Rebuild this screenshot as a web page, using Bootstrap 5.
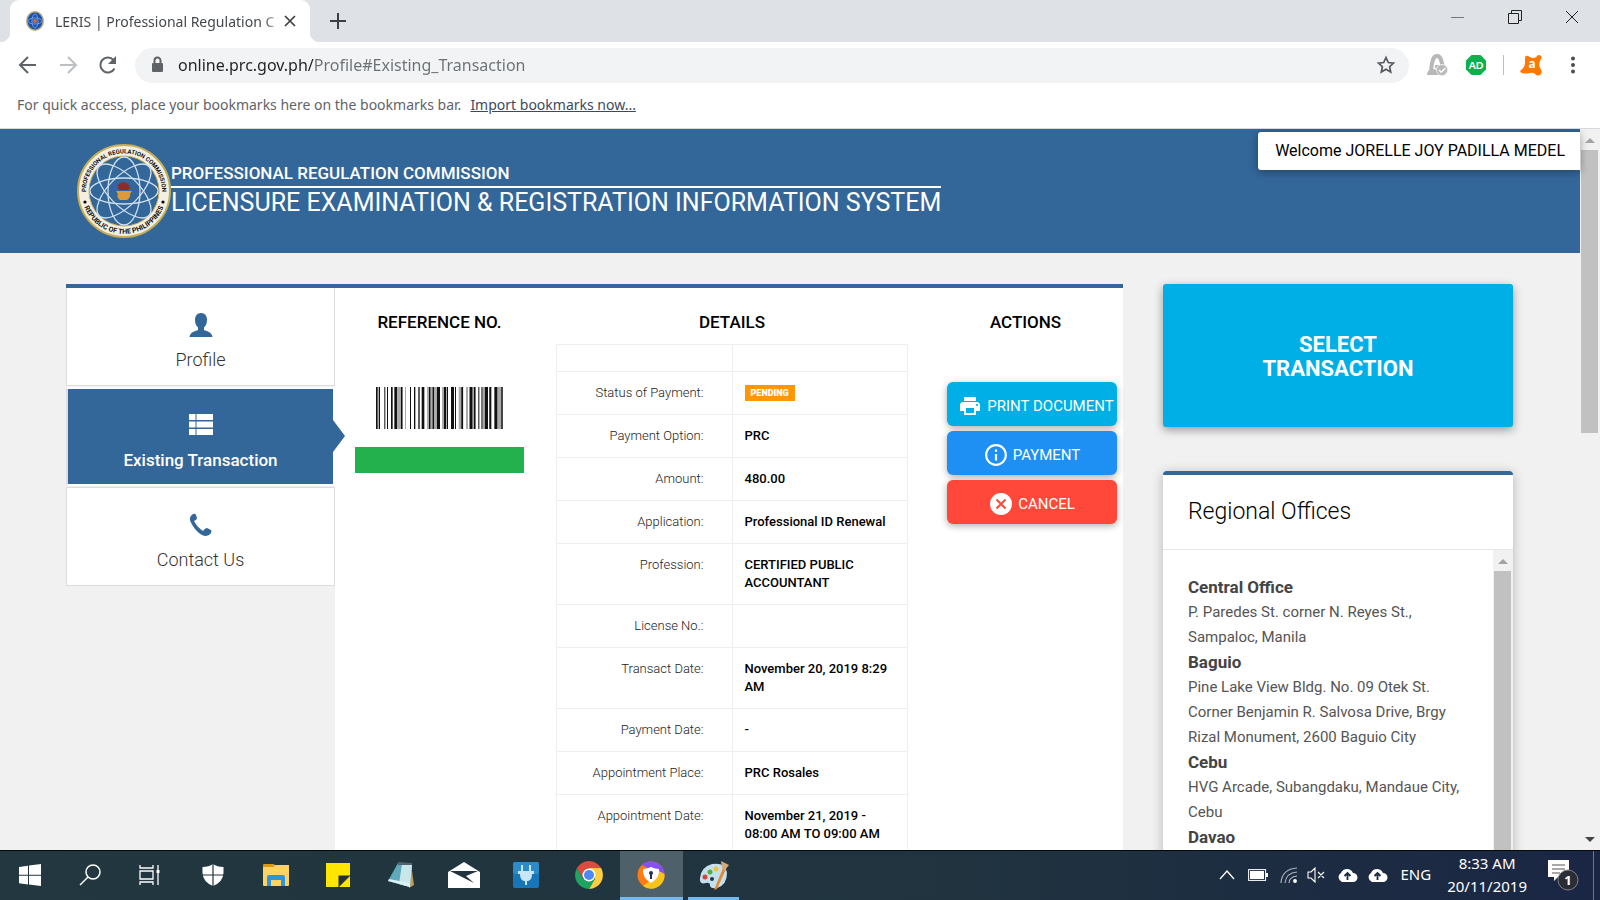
<!DOCTYPE html>
<html lang="en">
<head>
<meta charset="utf-8">
<meta name="viewport" content="width=device-width, initial-scale=1">
<title>LERIS | Professional Regulation Commission</title>
<link href="https://cdn.jsdelivr.net/npm/bootstrap@5.3.0/dist/css/bootstrap.min.css" rel="stylesheet">
<style>
  :root { --prc: #336699; --sky: #00afe6; }
  body { font-family: Roboto, sans-serif; background: #f1f1f1; color: #000; }
  svg { display: block; flex: none; }
  .ui-font { font-family: "Noto Sans", "Open Sans", sans-serif; }
  .plain { background: none; border: 0; padding: 0; display: flex; align-items: center; justify-content: center; }

  /* browser window */
  .tabstrip { background: #dee1e6; height: 42px; padding-left: 10px; }
  .tab-item { position: relative; width: 300px; background: #fff; border-radius: 9px 9px 0 0; padding: 0 12px 0 15px; font-size: 14px; color: #45494d; }
  .tab-item::before, .tab-item::after { content: ""; position: absolute; bottom: 0; width: 9px; height: 9px; }
  .tab-item::before { left: -9px; background: radial-gradient(circle at 0 0, transparent 9px, #fff 9px); }
  .tab-item::after { right: -9px; background: radial-gradient(circle at 100% 0, transparent 9px, #fff 9px); }
  .tab-text { flex: 1; margin-left: 10px; white-space: nowrap; -webkit-mask-image: linear-gradient(90deg, #000 92%, transparent); }
  .win-btn { width: 57px; padding-bottom: 8px; }
  .toolbar { height: 46px; background: #fff; padding: 0 20px 0 16px; }
  .nav-btn { width: 24px; height: 24px; }
  .omnibox { background: #f1f3f4; border-radius: 18px; height: 35px; padding: 0 13px 0 13px; margin-left: 15px; }
  .omnibox input { border: 0; outline: 0; padding: 0; margin-left: 12px; font-size: 16px; height: 30px;
    background: linear-gradient(90deg, #202124 136px, #6b7075 136px); -webkit-background-clip: text; background-clip: text; -webkit-text-fill-color: transparent; }
  .bookmarks { height: 41px; background: #fff; border-bottom: 1px solid #d5d8dc; padding: 0 17px 8px; font-size: 14px; color: #5f6368; gap: 9px; }
  .bookmarks a { color: #3c4a60; }

  /* scroll bars */
  .sbar { width: 20px; background: #f1f1f1; flex: none; }
  .sbar i { display: block; background: #c1c1c1; margin: 0 2px 0 1px; }
  .sbar-h { height: 283px; }

  /* page */
  .site-head { background: var(--prc); height: 124px; color: #fff; padding: 15px 0 0 77px; position: relative; }
  .org { font-size: 17px; line-height: 20px; padding: 19px 0 3px; border-bottom: 2px solid #fff; font-weight: 500; }
  .sys { font-size: 25px; line-height: 30px; font-weight: 400; margin: 0; }
  .welcome { position: absolute; top: 3px; right: 0; background: #fff; color: #000; height: 38px; line-height: 38px; font-size: 16px; padding: 0 15px 0 17px; border-radius: 3px 0 0 3px; box-shadow: 0 2px 8px rgba(0,0,0,.35); }
  .layout { display: grid; grid-template-columns: 269fr 788fr 40fr 350fr; padding: 31px 67px 0 66px; }
  .menu { border-top: 4px solid var(--prc); }
  .menu a { border: 1px solid #ddd; background: #fff; color: #333; font-size: 18px; font-weight: 300; line-height: 24px; height: 99px; margin-bottom: 1px; padding-top: 11px; gap: 11px; text-decoration: none; position: relative; }
  .menu a:first-child { border-top: 0; height: 98px; }
  .menu .current { background: var(--prc); color: #fff; font-size: 17px; font-weight: 500; border: 2px solid #fff; border-left-color: #ddd; }
  .menu .current::after { content: ""; position: absolute; left: 100%; top: 31px; border: solid transparent; border-width: 16px 0 16px 12px; border-left-color: var(--prc); }
  .panel { background: #fff; border-top: 4px solid var(--prc); display: grid; grid-template-columns: 200fr 393fr 195fr; align-content: start; min-height: 600px; }
  .panel h2 { font-size: 17px; line-height: 26px; font-weight: 500; text-align: center; margin: 21px 0 9px; }
  .ref { padding: 0 11px 0 20px; }
  .barcode { margin-top: 52px; }
  .ref-box { background: #22b14c; height: 26px; margin-top: 18px; }
  .facts { padding: 0 20px 0 21px; }
  .facts table { width: 100%; table-layout: fixed; font-size: 13px; line-height: 18px; border-collapse: collapse; }
  .facts th, .facts td { border: 1px solid #eee; vertical-align: top; padding: 12px; }
  .facts th { text-align: right; font-weight: 300; color: #222; padding-right: 28px; }
  .facts td { font-weight: 500; color: #000; }
  .facts tr:first-child > * { padding: 0; height: 27px; }
  .tag { display: inline-block; background: #ff9800; color: #fff; font-size: 9px; font-weight: 900; line-height: 16px; padding: 0 6px; border-radius: 0; margin-top: 1px; vertical-align: top; }
  .acts { padding: 38px 6px 0 19px; gap: 5px; }
  .acts button { height: 44px; border: 0; border-radius: 6px; color: #fff; font-size: 15px; font-weight: 400; padding: 4px 0 0; white-space: nowrap; box-shadow: 0 2px 7px rgba(0,0,0,.32); gap: 5px; }
  .print { background: #00afe6; }
  .pay { background: #1e90f3; }
  .cancel { background: #ff483a; }
  .pick { background: var(--sky); color: #fff; border: 0; border-radius: 3px; height: 143px; font-size: 22px; line-height: 24px; font-weight: 700; box-shadow: 0 3px 10px rgba(0,0,0,.38); padding: 2px 60px 0; }
  .offices { background: #fff; border-top: 4px solid var(--prc); border-radius: 4px 4px 0 0; margin-top: 44px; box-shadow: 0 2px 12px rgba(0,0,0,.25); }
  .offices h3 { font-size: 23px; line-height: 74px; font-weight: 300; padding-left: 25px; margin: 0; border-bottom: 1px solid #e6e6e6; }
  .offices dl { font-size: 15px; line-height: 25px; padding: 25px 28px 0 25px; color: #555; margin: 0; flex: 1; }
  .offices dt { font-size: 17px; font-weight: 700; color: #444; }
  .offices dd { margin: 0; }

  /* taskbar */
  .taskbar { height: 50px; border-top: 1px solid #05090c; background: linear-gradient(90deg, #22373f, #20333f 60%, #1a2644); color: #fff; }
  .sys-icons { width: 180px; }
  .app-icons { width: 563px; margin-left: 2px; }
  .taskbar .plain { flex: 1 1 0; height: 49px; padding-bottom: 2px; }
  .taskbar .app-on { background-color: #4e616a; border-bottom: 3px solid #76b9ed; padding: 1px 0 0; }
  .taskbar .app-run { background: linear-gradient(#76b9ed, #76b9ed) center bottom / 51px 3px no-repeat; }
  .tray { font-size: 15px; line-height: 23px; margin-right: 6px; padding: 0 14px 2px 0; border-right: 1px solid #6d7687; height: 49px; }
</style>
</head>
<body>
<div class="vh-100 d-flex flex-column overflow-hidden">

  <header class="ui-font">
    <div class="tabstrip d-flex align-items-stretch">
      <div class="tab-item d-flex align-items-center">
        <svg width="20" height="22" viewBox="0 0 20 22"><ellipse cx="10" cy="11" rx="9" ry="10" fill="#b9a97c"/><ellipse cx="10" cy="11" rx="7.500" ry="8.500" fill="#1c51a8"/><g fill="none" stroke="#6b9be6"><ellipse cx="10" cy="11" rx="3" ry="7"/><ellipse cx="10" cy="11" rx="7" ry="3"/></g><circle cx="10" cy="11" r="2" fill="#d2693a"/></svg>
        <span class="tab-text">LERIS | Professional Regulation C</span>
        <button class="plain" aria-label="Close tab"><svg width="16" height="16" viewBox="0 0 16 16" stroke="#3c4043" stroke-width="1.700"><path d="M3 3l10 10M13 3L3 13"/></svg></button>
      </div>
      <button class="plain ms-3 ps-1" aria-label="New tab"><svg width="16" height="16" viewBox="0 0 16 16" stroke="#3c4043" stroke-width="2"><path d="M8 0v16M0 8h16"/></svg></button>
      <div class="ms-auto d-flex">
        <button class="plain win-btn" aria-label="Minimize"><svg width="13" height="13" stroke="#777"><path d="M0 6.500h13"/></svg></button>
        <button class="plain win-btn" aria-label="Restore"><svg width="14" height="14" fill="none" stroke="#222"><path d="M.5 3.500h10v10H.5zM3.500 3.500v-3h10v10h-3"/></svg></button>
        <button class="plain win-btn" aria-label="Close"><svg width="14" height="14" stroke="#222"><path d="M1 1l12 12M13 1L1 13"/></svg></button>
      </div>
    </div>

    <div class="toolbar d-flex align-items-center">
      <button class="plain nav-btn" aria-label="Back"><svg width="22" height="22" viewBox="0 0 22 22" fill="none" stroke="#5f6368" stroke-width="2"><path d="M19 11H4M11 3l-8 8 8 8"/></svg></button>
      <button class="plain nav-btn ms-3" aria-label="Forward"><svg width="22" height="22" viewBox="0 0 22 22" fill="none" stroke="#bdc0c3" stroke-width="2"><path d="M3 11h15M11 3l8 8-8 8"/></svg></button>
      <button class="plain nav-btn ms-3" aria-label="Reload"><svg width="22" height="22" viewBox="0 0 22 22"><path d="M17.500 14.500A7.500 7.500 0 1 1 16.500 6" fill="none" stroke="#5f6368" stroke-width="2"/><path d="M19 2v8h-8z" fill="#5f6368"/></svg></button>
      <div class="omnibox d-flex align-items-center flex-fill">
        <svg width="18" height="18" viewBox="0 0 18 18"><rect x="4" y="7" width="11" height="9" rx="1" fill="#5f6368"/><path d="M6.500 8V4.500a3 3 0 0 1 6 0V8" fill="none" stroke="#5f6368" stroke-width="2"/></svg>
        <input class="flex-fill" type="text" aria-label="Address" value="online.prc.gov.ph/Profile#Existing_Transaction">
        <button class="plain" aria-label="Bookmark this page"><svg width="20" height="20" viewBox="0 0 20 20" fill="none" stroke="#55595e" stroke-width="1.700"><path d="M10 2.500l2.300 5 5.200.6-3.900 3.600 1.100 5.300-4.700-2.700L5.300 17l1.100-5.300L2.500 8.100l5.200-.6z"/></svg></button>
      </div>
      <button class="plain ms-3" aria-label="Online security"><svg width="24" height="24" viewBox="0 0 24 24"><path d="M6 18c1-7 1-15 6-15s5 8 6 15" fill="none" stroke="#b8b8b8" stroke-width="4"/><path d="M2 22q0-5 5-6l8 1v5z" fill="#b8b8b8"/><path d="M10 12h4v3h-4z" fill="#b8b8b8"/><circle cx="17" cy="17" r="5.500" fill="#b8b8b8" stroke="#ececec"/><path d="M14 17l2.200 2.200 4-4" fill="none" stroke="#fff" stroke-width="1.600"/></svg></button>
      <button class="plain ms-3" aria-label="AdBlock"><svg width="22" height="22" viewBox="0 0 22 22"><path d="M6.500 1h9L21 6.500v9L15.500 21h-9L1 15.500v-9z" fill="#0db14b"/><text x="11" y="14.500" text-anchor="middle" font-family="Lato" font-weight="900" font-size="10" fill="#fff">AD</text></svg></button>
      <span class="vr mx-3 align-self-center" style="height:20px"></span>
      <button class="plain" aria-label="Avast"><svg width="22" height="22" viewBox="0 0 22 22"><path d="M5 4q0-3 3-2l4 2q4 0 5-2 2-2 4 0 1 1 0 3-3 4-1 9 3 4 1 6-3 3-6 0-2-2-5-1-5 1-8 0-3-1-1-3 4-3 4-7z" fill="#ff7800"/><text x="12" y="14" text-anchor="middle" font-family="Lato" font-weight="900" font-size="13" fill="#fff">a</text></svg></button>
      <button class="plain ms-3" aria-label="Menu"><svg class="ms-1" width="18" height="18" fill="#4a4e52"><circle cx="11" cy="2.500" r="2"/><circle cx="11" cy="9" r="2"/><circle cx="11" cy="15.500" r="2"/></svg></button>
    </div>

    <div class="bookmarks d-flex align-items-center">
      <span>For quick access, place your bookmarks here on the bookmarks bar.</span>
      <a href="#">Import bookmarks now...</a>
    </div>
  </header>

  <div class="d-flex flex-fill overflow-hidden">
    <div class="flex-fill">
      <div class="site-head">
        <div class="d-flex">
          <svg width="94" height="94" viewBox="-47 -47 94 94">
            <circle r="46" fill="#f3efe2" stroke="#c6ad55" stroke-width="2"/>
            <circle r="35" fill="#336699" stroke="#c6ad55"/>
            <g fill="none" stroke="#cfe0f2" stroke-width="1.300"><ellipse rx="34" ry="13"/><ellipse rx="16" ry="34"/><ellipse rx="35" ry="15" transform="rotate(45)"/><ellipse rx="35" ry="15" transform="rotate(-45)"/></g>
            <path d="M-8 0H8L6 3Q7 6 3 9H-4Q-8 6-6 3z" fill="#dd9a3a"/><path d="M-5-1q-3-6 2-7 4-2 7 1 4 4-1 6z" fill="#912a20"/>
            <path id="ringTop" d="M-37.400 7A38 38 0 1 1 37.400 7" fill="none"/>
            <path id="ringBottom" d="M-41 12A42.700 42.700 0 0 0 41 12" fill="none"/>
            <g font-family="Roboto" font-weight="700" fill="#111" text-anchor="middle"><text font-size="6"><textPath href="#ringTop" startOffset="50%">PROFESSIONAL REGULATION COMMISSION</textPath></text><text font-size="7"><textPath href="#ringBottom" startOffset="50%">REPUBLIC OF THE PHILIPPINES</textPath></text></g>
            <circle cx="-39" cy="11" r="1.600"/><circle cx="39" cy="11" r="1.600"/>
          </svg>
          <div>
            <div class="org">PROFESSIONAL REGULATION COMMISSION</div>
            <h1 class="sys">LICENSURE EXAMINATION &amp; REGISTRATION INFORMATION SYSTEM</h1>
          </div>
        </div>
        <div class="welcome">Welcome JORELLE JOY PADILLA MEDEL</div>
      </div>

      <div class="layout">
        <nav class="menu">
          <a href="#Profile" class="d-flex flex-column align-items-center justify-content-center">
            <svg width="24" height="24" viewBox="0 0 24 24" fill="#336699"><path d="M12 0c4 0 6 3 6 7 0 3-1 6-3 7.500V17c2 1 8 2 8.500 7H.5C1 19 7 18 9 17v-2.500C7 13 6 10 6 7c0-4 2-7 6-7z"/></svg>
            Profile</a>
          <a href="#Existing_Transaction" class="current d-flex flex-column align-items-center justify-content-center">
            <svg width="24" height="24" viewBox="0 0 24 24" fill="#fff"><path d="M0 1h6.500v6H0zM7.500 1H24v6H7.500zM0 8.500h6.500v6H0zM7.500 8.500H24v6H7.500zM0 16h6.500v6H0zM7.500 16H24v6H7.500z"/></svg>
            Existing Transaction</a>
          <a href="#Contact" class="d-flex flex-column align-items-center justify-content-center">
            <svg width="24" height="24" viewBox="0 0 24 24" fill="#336699"><path d="M4 1q2-1 3 1l1 3q0 2-3 3 3 6 9 10 2-3 4-3l4 2q1 1 0 3-2 3-6 3-5-1-10-7Q0 8 1 5q0-2 3-4z"/></svg>
            Contact Us</a>
        </nav>

        <main class="panel">
          <section>
            <div class="ref">
              <h2>REFERENCE NO.</h2>
              <svg class="barcode mx-auto" width="127" height="42" viewBox="0 0 381 126" preserveAspectRatio="none">
                <path fill="#aaa" d="M66 0h15v126h-15zM87 0h3v126h-3zM153 0h30v126h-30zM198 0h15v126h-15zM248 0h14v126h-14zM270 0h6v126h-6zM280 0h20v126h-20zM315 0h10v126h-10zM340 0h8v126h-8zM364 0h17v126h-17z"/>
                <path fill="#111" d="M0 0h5v126h-5zM8 0h4v126h-4zM25 0h3v126h-3zM33 0h3v126h-3zM45 0h5v126h-5zM55 0h9v126h-9zM75 0h4v126h-4zM102 0h3v126h-3zM114 0h4v126h-4zM127 0h4v126h-4zM137 0h8v126h-8zM159 0h4v126h-4zM170 0h4v126h-4zM183 0h9v126h-9zM204 0h6v126h-6zM213 0h3v126h-3zM225 0h9v126h-9zM237 0h3v126h-3zM256 0h5v126h-5zM281 0h8v126h-8zM294 0h4v126h-4zM307 0h3v126h-3zM317 0h2v126h-2zM326 0h10v126h-10zM340 0h5v126h-5zM355 0h9v126h-9zM376 0h4v126h-4z"/>
              </svg>
              <div class="ref-box"></div>
            </div>
          </section>
          <section class="facts">
            <h2>DETAILS</h2>
            <table>
              <tr><th></th><td></td></tr>
              <tr><th>Status of Payment:</th><td><span class="tag">PENDING</span></td></tr>
              <tr><th>Payment Option:</th><td>PRC</td></tr>
              <tr><th>Amount:</th><td>480.00</td></tr>
              <tr><th>Application:</th><td>Professional ID Renewal</td></tr>
              <tr><th>Profession:</th><td>CERTIFIED PUBLIC ACCOUNTANT</td></tr>
              <tr><th>License No.:</th><td></td></tr>
              <tr><th>Transact Date:</th><td>November 20, 2019 8:29 AM</td></tr>
              <tr><th>Payment Date:</th><td>-</td></tr>
              <tr><th>Appointment Place:</th><td>PRC Rosales</td></tr>
              <tr><th>Appointment Date:</th><td>November 21, 2019 - 08:00 AM TO 09:00 AM</td></tr>
            </table>
          </section>
          <section>
            <h2>ACTIONS</h2>
            <div class="acts d-flex flex-column">
              <button class="print d-flex align-items-center justify-content-center ps-2"><svg width="24" height="24" viewBox="0 0 24 24" fill="#fff"><path d="M19 8H5c-1.660 0-3 1.340-3 3v6h4v4h12v-4h4v-6c0-1.660-1.340-3-3-3zm-3 11H8v-5h8v5zm3-7c-.550 0-1-.450-1-1s.450-1 1-1 1 .450 1 1-.450 1-1 1zm-1-9H6v4h12V3z"/></svg>PRINT DOCUMENT</button>
              <button class="pay d-flex align-items-center justify-content-center"><svg width="24" height="24" viewBox="1 1 22 22" fill="#fff"><path d="M11 17h2v-6h-2v6zm1-15C6.480 2 2 6.480 2 12s4.480 10 10 10 10-4.480 10-10S17.520 2 12 2zm0 18c-4.410 0-8-3.590-8-8s3.590-8 8-8 8 3.590 8 8-3.590 8-8 8zM11 9h2V7h-2v2z"/></svg>PAYMENT</button>
              <button class="cancel d-flex align-items-center justify-content-center"><svg width="24" height="24" viewBox="0 0 24 24"><circle cx="12" cy="12" r="11" fill="#fff"/><path d="M7.500 7.500l9 9M16.500 7.500l-9 9" stroke="#ff483a" stroke-width="2"/></svg>CANCEL</button>
            </div>
          </section>
        </main>
        <div></div>

        <aside class="d-flex flex-column">
          <button class="pick">SELECT TRANSACTION</button>
          <section class="offices flex-fill">
            <h3>Regional Offices</h3>
            <div class="d-flex">
              <dl>
                <dt>Central Office</dt><dd>P. Paredes St. corner N. Reyes St., Sampaloc, Manila</dd>
                <dt>Baguio</dt><dd>Pine Lake View Bldg. No. 09 Otek St. Corner Benjamin R. Salvosa Drive, Brgy Rizal Monument, 2600 Baguio City</dd>
                <dt>Cebu</dt><dd>HVG Arcade, Subangdaku, Mandaue City, Cebu</dd>
                <dt>Davao</dt>
              </dl>
              <div class="sbar d-flex flex-column"><svg width="20" height="21" fill="#a3a3a3"><path d="M5 14l5-5 5 5z"/></svg><i class="flex-fill"></i></div>
            </div>
          </section>
        </aside>
      </div>
    </div>
    <div class="sbar d-flex flex-column"><svg width="20" height="21" fill="#a3a3a3"><path d="M5 14l5-5 5 5z"/></svg><i class="sbar-h"></i><svg class="mt-auto" width="20" height="20" fill="#444"><path d="M5 7l5 5 5-5z"/></svg></div>
  </div>

  <footer class="taskbar ui-font d-flex">
    <div class="sys-icons d-flex">
      <button class="plain" aria-label="Start"><svg width="22" height="22" viewBox="0 0 22 22" fill="#fff"><path d="M0 3l9-1.300v9H0zM10 1.500L22 0v10.700H10zM0 11.700h9v8.800L0 19.200zM10 11.700h12V22l-12-1.400z"/></svg></button>
      <button class="plain" aria-label="Search"><svg width="22" height="22" viewBox="0 0 22 22" fill="none" stroke="#fff" stroke-width="1.500"><circle cx="14" cy="8" r="7"/><path d="M9 13l-8 8"/></svg></button>
      <button class="plain" aria-label="Task view"><svg width="22" height="22" viewBox="0 0 22 22" fill="none" stroke="#fff" stroke-width="1.300"><path d="M1 1v3h13V1M1 7h13v8H1zM1 21v-3h13v3M19 1v20"/><path d="M17.500 6h3v3h-3z" fill="#fff" stroke="none"/></svg></button>
    </div>
    <div class="app-icons d-flex">
      <button class="plain" aria-label="Windows Security"><svg width="22" height="22" viewBox="0 0 22 22"><path d="M11 0q4 3 10.500 3v6Q21 18 11 22 1 18 .5 9V3Q7 3 11 0z" fill="#fff"/><path d="M11 0v22M0 11h22" stroke="#20333f" stroke-width="1.200"/></svg></button>
      <button class="plain" aria-label="File Explorer"><svg width="28" height="24" viewBox="0 0 28 24"><path d="M1 2q0-1 1-1h10l2 3H1z" fill="#dd9a10"/><path d="M1 4h10l2-2h14v20q0 1-1 1H2q-1 0-1-1z" fill="#ffd264"/><path d="M5 23V14q0-2 2-2h14q2 0 2 2v9h-4v-6h-10v6z" fill="#2e95dc"/></svg></button>
      <button class="plain" aria-label="Sticky Notes"><svg width="24" height="24" viewBox="0 0 24 24"><path d="M0 0h24v12L12 24H0z" fill="#ffe600"/><path d="M12.500 12.500H24L12.500 24z" fill="#23303c"/><path d="M24 13v11H13z" fill="#ffe600"/></svg></button>
      <button class="plain" aria-label="Notepad"><svg width="28" height="28" viewBox="0 0 28 28"><path d="M24 3l3 21-5 3z" fill="#c39a52"/><path d="M11 2l14 1-2 23-22-6z" fill="#5fa9ba"/><path d="M15 3l10 1-2 22-11-3z" fill="#c9e6ea"/><path d="M2 18l21 4v4L1 20z" fill="#dceff2"/><path d="M11 1l14 1v2L11 4z" fill="#50666c"/></svg></button>
      <button class="plain" aria-label="Mail"><svg width="32" height="26" viewBox="0 0 32 26"><path d="M0 10L16 0l16 10v16H0z" fill="#fff"/><path d="M2 9h28l-12 5 8 7L2 9z" fill="#20333f"/></svg></button>
      <button class="plain" aria-label="Power"><svg width="26" height="26" viewBox="0 0 26 26"><rect width="26" height="26" rx="2" fill="#1676b8"/><rect y="0" width="26" height="12" rx="2" fill="#2d8bc8"/><path d="M8 3h2v6h6V3h2v6h3v3h-2q0 6-4 7h-1v4h-2v-4h-1q-4-1-4-7H5V9h3z" fill="#c9e6f6"/></svg></button>
      <button class="plain" aria-label="Chrome"><svg width="28" height="28" viewBox="-14 -14 28 28"><path d="M-12.100-7A14 14 0 0 1 12.100-7H0L-6 3.500z" fill="#dd4b3e"/><path d="M12.100-7A14 14 0 0 1 0 14L6 3.500 0-7z" fill="#ffcd40"/><path d="M0 14A14 14 0 0 1-12.100-7L-6 3.500H6z" fill="#1da462"/><circle r="6.500" fill="#fff"/><circle r="5" fill="#4a8af4"/></svg></button>
      <button class="plain app-on" aria-label="Avast Secure Browser"><svg width="28" height="28" viewBox="-14 -14 28 28"><circle r="13.500" fill="#ff7b12"/><path d="M-9-10A13.500 13.500 0 0 1 13.500 1L5-1-2-6z" fill="#8650f5"/><path d="M13.500-1A13.500 13.500 0 0 1-8 11L0 5 8-4z" fill="#f7c41c"/><path d="M0-8q4 2 8 2 1 9-8 14-9-5-8-14 4 0 8-2z" fill="#fff"/><circle cy="-2" r="2" fill="#1f2f55"/><path d="M-1-1h2v5h-2z" fill="#1f2f55"/></svg></button>
      <button class="plain app-run" aria-label="Paint"><svg width="30" height="30" viewBox="0 0 30 30"><path d="M1 18Q2 7 13 4q14-2 15 9 0 12-10 15-7 1-7-3 0-3-4-2-7 2-6-5z" fill="#c4e0ee"/><circle cx="6" cy="17" r="2.500" fill="#d9443a"/><circle cx="11" cy="12" r="2.500" fill="#55ad3c"/><circle cx="17" cy="9" r="2.500" fill="#f0c23a"/><circle cx="13" cy="19" r="2" fill="#22363f"/><path d="M24 8l3 1-9 20-3 1z" fill="#e58a2e"/><path d="M22 1l8 4-4 5-3-2z" fill="#d3a97a"/></svg></button>
    </div>
    <div class="tray ms-auto d-flex align-items-center">
      <svg width="16" height="16" viewBox="0 0 16 16" fill="none" stroke="#fff" stroke-width="1.300"><path d="M1 12l7-8 7 8"/></svg>
      <svg style="margin-left:13px" width="20" height="12" viewBox="0 0 20 12"><rect x=".6" y=".6" width="17" height="10.800" fill="none" stroke="#fff"/><rect x="2" y="2" width="14" height="8" fill="#fff"/><path d="M18 4h2v4h-2z" fill="#fff"/></svg>
      <svg style="margin-left:12px" width="18" height="18" viewBox="0 0 18 18" fill="none" stroke="#a9b2bd" stroke-width="1.200"><path d="M1 17Q2 3 17 2M5 17Q6 7 17 6M9 17q0-6 8-7"/><circle cx="15" cy="15" r="1.300" fill="#fff" stroke="#fff"/></svg>
      <svg style="margin-left:9px" width="18" height="16" viewBox="0 0 18 16" fill="none" stroke="#fff" stroke-width="1.100"><path d="M1 5h3l4-4v14l-4-4H1zM11 5l6 6M17 5l-6 6"/></svg>
      <svg style="margin-left:12px" width="21" height="16" viewBox="0 0 21 16"><path d="M5 15a5 5 0 0 1-1-9 6.500 6.500 0 0 1 12 0 4.500 4.500 0 0 1 0 9z" fill="#fff"/><path d="M10.500 13V7M7.500 9l3-3 3 3" stroke="#1c2c40" stroke-width="1.800" fill="none"/></svg>
      <svg style="margin-left:9px" width="21" height="16" viewBox="0 0 21 16"><path d="M5 15a5 5 0 0 1-1-9 6.500 6.500 0 0 1 12 0 4.500 4.500 0 0 1 0 9z" fill="#fff"/><path d="M10.500 13V7M7.500 9l3-3 3 3" stroke="#1c2c40" stroke-width="1.800" fill="none"/></svg>
      <span style="margin-left:13px">ENG</span>
      <div class="text-center ms-3">8:33 AM<br>20/11/2019</div>
      <svg style="margin-left:20px" width="32" height="32" viewBox="0 0 32 32"><path d="M1 1h21v17H11l-4 4v-4H1z" fill="#fff"/><path d="M5 6h13M5 10h13M5 14h8" stroke="#555" stroke-width="1.200"/><circle cx="21" cy="21" r="10" fill="#2a2d33" stroke="#7c8089"/><text x="21" y="26" text-anchor="middle" font-size="13" font-weight="700" fill="#fff">1</text></svg>
    </div>
  </footer>
</div>
<script src="https://cdn.jsdelivr.net/npm/bootstrap@5.3.0/dist/js/bootstrap.bundle.min.js"></script>
</body>
</html>
